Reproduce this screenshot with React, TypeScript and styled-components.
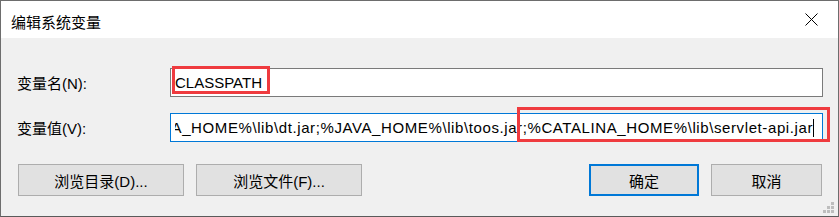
import React from 'react';
import styled, { createGlobalStyle } from 'styled-components';

const GlobalStyle = createGlobalStyle`
  html, body { margin: 0; padding: 0; background: #ffffff; }
  body {
    font-family: "Liberation Sans", "Noto Sans CJK SC", sans-serif;
    -webkit-font-smoothing: antialiased;
  }
`;

const Window = styled.div`
  width: 839px;
  height: 217px;
  box-sizing: border-box;
  border: 1px solid #6d6d6d;
  border-bottom-color: #5a5a5a;
  background: #f0f0f0;
  display: flex;
  flex-direction: column;
  position: relative;
  overflow: hidden;
`;

const TitleBar = styled.div`
  height: 37px;
  background: #ffffff;
  display: flex;
  align-items: center;
  justify-content: space-between;
  padding-left: 10px;
  flex-shrink: 0;
`;

const Title = styled.span`
  font-size: 15px;
  color: #000;
  padding-top: 3px;
`;

const CloseButton = styled.div`
  width: 46px;
  height: 37px;
  display: flex;
  align-items: center;
  justify-content: center;
  margin-right: 4px;
`;

const Body = styled.div`
  padding: 30px 15px 0 16px;
  display: flex;
  flex-direction: column;
`;

const FieldRow = styled.div<{ $gap?: number }>`
  display: flex;
  align-items: center;
  margin-bottom: ${p => p.$gap ?? 0}px;
`;

const Label = styled.label`
  width: 153px;
  flex-shrink: 0;
  font-size: 15px;
  color: #000;
`;

const InputBox = styled.div<{ $focused?: boolean }>`
  position: relative;
  flex: 1;
  min-width: 0;
  height: 29px;
  box-sizing: border-box;
  border: 1px solid ${p => (p.$focused ? '#0078d7' : '#7a7a7a')};
  background: #fff;
  display: flex;
  align-items: center;
  padding: 0 8px 0 4px;
  font-size: 15px;
  color: #000;
  white-space: nowrap;
`;

/* the value is scrolled to its end, so it overflows to the left */
const Clip = styled.div`
  flex: 1;
  min-width: 0;
  overflow: hidden;
  display: flex;
  flex-direction: row-reverse;
  align-items: center;
`;

const ClipText = styled.span`
  flex-shrink: 0;
  letter-spacing: 0.6px;
`;

const Caret = styled.span`
  display: inline-block;
  width: 1px;
  height: 18px;
  background: #000;
  flex-shrink: 0;
`;

const Highlight = styled.div<{ $l: number; $t: number; $w: number; $h: number }>`
  position: absolute;
  left: ${p => p.$l}px;
  top: ${p => p.$t}px;
  width: ${p => p.$w}px;
  height: ${p => p.$h}px;
  box-sizing: border-box;
  border: 3px solid #ef3b3f;
  pointer-events: none;
`;

const ButtonRow = styled.div`
  display: flex;
  margin-top: 22px;
  padding-left: 1px;
`;

const Button = styled.button<{ $w: number; $primary?: boolean; $ml?: number }>`
  width: ${p => p.$w}px;
  height: 32px;
  margin-left: ${p => p.$ml ?? 0}px;
  box-sizing: border-box;
  background: #e1e1e1;
  border: ${p => (p.$primary ? '2px solid #0078d7' : '1px solid #adadad')};
  font-family: inherit;
  font-size: 15px;
  color: #000;
  padding: 0;
  display: flex;
  align-items: center;
  justify-content: center;
`;

const Grip = styled.svg`
  position: absolute;
  right: 3px;
  bottom: 2px;
`;

export default function App() {
  const value =
    '.;%JAVA_HOME%\\lib\\dt.jar;%JAVA_HOME%\\lib\\toos.jar;%CATALINA_HOME%\\lib\\servlet-api.jar';
  return (
    <>
      <GlobalStyle />
      <Window>
        <TitleBar>
          <Title>编辑系统变量</Title>
          <CloseButton>
            <svg width="13" height="13" viewBox="0 0 13 13">
              <path d="M0.5 0.5 L12.5 12.5 M12.5 0.5 L0.5 12.5" stroke="#000" strokeWidth="1" />
            </svg>
          </CloseButton>
        </TitleBar>
        <Body>
          <FieldRow $gap={16}>
            <Label>变量名(N):</Label>
            <InputBox>
              CLASSPATH
              <Highlight $l={1} $t={-3} $w={98} $h={28} />
            </InputBox>
          </FieldRow>
          <FieldRow>
            <Label>变量值(V):</Label>
            <InputBox $focused>
              <Clip>
                <ClipText>{value}</ClipText>
              </Clip>
              <Caret />
              <Highlight $l={346} $t={-7} $w={313} $h={35} />
            </InputBox>
          </FieldRow>
          <ButtonRow>
            <Button $w={166}>浏览目录(D)...</Button>
            <Button $w={166} $ml={12}>浏览文件(F)...</Button>
            <Button $w={110} $ml={227} $primary>确定</Button>
            <Button $w={111} $ml={12}>取消</Button>
          </ButtonRow>
        </Body>
        <Grip width="12" height="12" viewBox="0 0 12 12">
          <rect x="8" y="0" width="3" height="3" fill="#bdbdbd" />
          <rect x="4" y="4" width="3" height="3" fill="#bdbdbd" />
          <rect x="8" y="4" width="3" height="3" fill="#bdbdbd" />
          <rect x="0" y="8" width="3" height="3" fill="#bdbdbd" />
          <rect x="4" y="8" width="3" height="3" fill="#bdbdbd" />
          <rect x="8" y="8" width="3" height="3" fill="#bdbdbd" />
        </Grip>
      </Window>
    </>
  );
}
